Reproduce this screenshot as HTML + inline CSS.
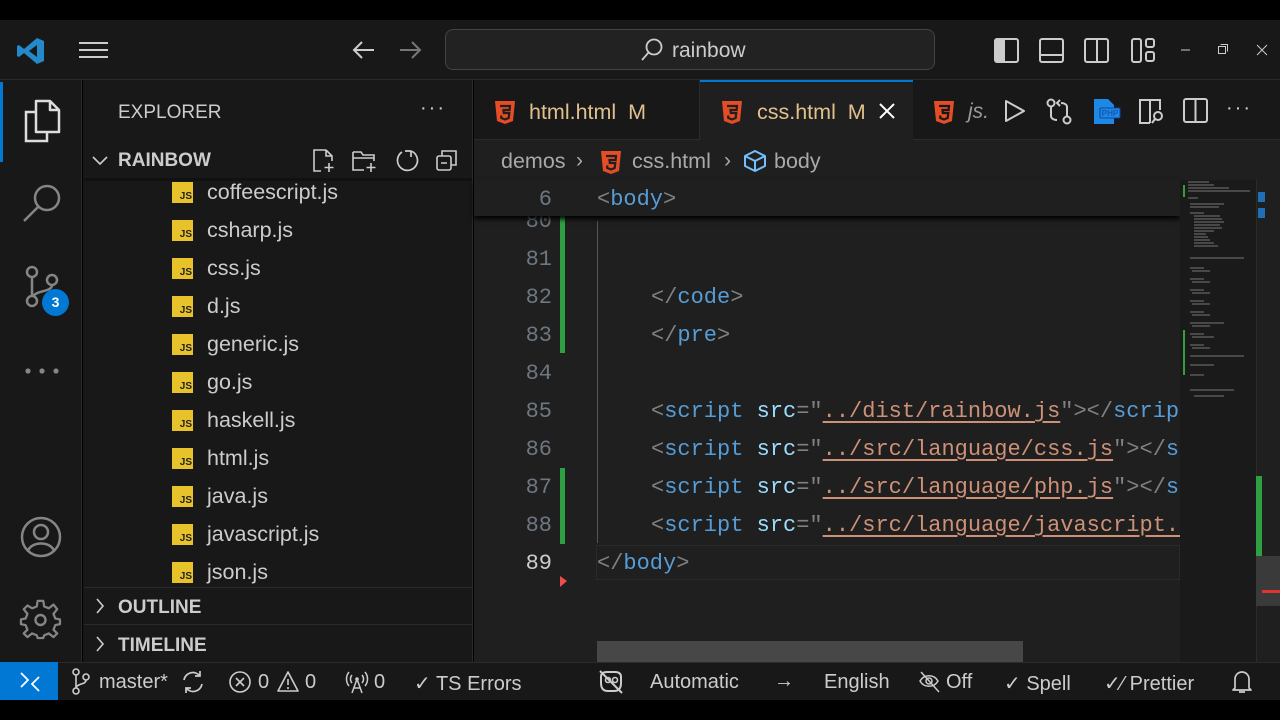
<!DOCTYPE html>
<html><head><meta charset="utf-8"><style>
*{box-sizing:border-box;margin:0;padding:0}
body{width:1280px;height:720px;background:#000;position:relative;overflow:hidden;font-family:"Liberation Sans",sans-serif;color:#ccc}
.a{position:absolute}
.mono{font-family:"Liberation Mono",monospace;font-size:22px}
.t{color:#808080}.tg{color:#569cd6}.at{color:#9cdcfe}.s{color:#ce9178;text-decoration:underline;text-underline-offset:4px}
.file{position:absolute;left:172px;height:38px;display:flex;align-items:center;font-size:21.5px;color:#ccc;padding-top:3px}
.js{width:21px;height:21px;background:#e8c22b;color:#222;font-size:10px;font-weight:bold;display:flex;align-items:flex-end;justify-content:flex-end;padding:0 1px 1px 0;margin-right:14px}
.ln{position:absolute;left:490px;width:62px;text-align:right;color:#6e7681}
svg{position:absolute;overflow:visible}
</style></head><body>
<!-- title bar -->
<div class="a" style="top:20px;left:0;width:1280px;height:60px;background:#181818;border-bottom:1px solid #2b2b2b"></div>
<svg style="left:16px;top:36px" width="30" height="30" viewBox="0 0 30 30"><path d="M21 2 L28 5 V25 L21 28 L8 17 L3 21 L1 20 V10 L3 9 L8 13 Z M21 9 L13 15 L21 21 Z" fill="#2489ca"/></svg>
<svg style="left:79px;top:42px" width="30" height="18"><path d="M0 1H29M0 8H29M0 15H29" stroke="#ccc" stroke-width="2"/></svg>
<svg style="left:352px;top:40px" width="24" height="20"><path d="M22 10H2M10 2L2 10L10 18" stroke="#ccc" stroke-width="2" fill="none"/></svg>
<svg style="left:398px;top:40px" width="24" height="20"><path d="M2 10H22M14 2L22 10L14 18" stroke="#777" stroke-width="2" fill="none"/></svg>
<div class="a" style="left:445px;top:29px;width:490px;height:41px;border:1px solid #444;border-radius:8px;background:#222"></div>
<svg style="left:640px;top:38px" width="24" height="24"><circle cx="14" cy="9" r="7.5" stroke="#ccc" stroke-width="1.8" fill="none"/><path d="M9 14L2 22" stroke="#ccc" stroke-width="1.8"/></svg>
<div class="a" style="left:672px;top:39px;font-size:21px;color:#ccc">rainbow</div>
<svg style="left:994px;top:38px" width="26" height="26"><rect x="1" y="1" width="23" height="23" rx="2" stroke="#ccc" stroke-width="2" fill="none"/><rect x="1" y="1" width="10" height="23" fill="#ccc"/></svg>
<svg style="left:1039px;top:38px" width="26" height="26"><rect x="1" y="1" width="23" height="23" rx="2" stroke="#ccc" stroke-width="2" fill="none"/><path d="M1 17H24" stroke="#ccc" stroke-width="2"/></svg>
<svg style="left:1084px;top:38px" width="26" height="26"><rect x="1" y="1" width="23" height="23" rx="2" stroke="#ccc" stroke-width="2" fill="none"/><path d="M13 1V24" stroke="#ccc" stroke-width="2"/></svg>
<svg style="left:1131px;top:38px" width="26" height="26"><rect x="1" y="1" width="9" height="23" rx="2" stroke="#ccc" stroke-width="2" fill="none"/><rect x="15" y="1" width="8" height="8" rx="2" stroke="#ccc" stroke-width="2" fill="none"/><rect x="15" y="14" width="8" height="9" rx="2" stroke="#ccc" stroke-width="2" fill="none"/></svg>
<svg style="left:1181px;top:49px" width="10" height="2"><path d="M0 1H9" stroke="#ccc"/></svg>
<svg style="left:1218px;top:44px" width="10" height="10"><rect x="0.5" y="2.5" width="7" height="7" stroke="#ccc" fill="none"/><path d="M2.5 0.5H9.5V7.5" stroke="#ccc" fill="none"/></svg>
<svg style="left:1256px;top:44px" width="12" height="12"><path d="M1 1L11 11M11 1L1 11" stroke="#ccc"/></svg>
<!-- activity bar -->
<div class="a" style="top:80px;left:0;width:82px;height:582px;background:#181818;border-right:1px solid #2b2b2b"></div>
<div class="a" style="top:82px;left:0;width:3px;height:80px;background:#0078d4"></div>
<svg style="left:22px;top:100px" width="40" height="42"><path d="M14 1H28L37 10V32H14Z M28 1V10H37" stroke="#ddd" stroke-width="2.5" fill="none" stroke-linejoin="round"/><path d="M14 12H4V41H25V32" stroke="#ddd" stroke-width="2.5" fill="none"/></svg>
<svg style="left:22px;top:183px" width="42" height="42"><circle cx="25" cy="15" r="12" stroke="#858585" stroke-width="2.5" fill="none"/><path d="M16 24L2 38" stroke="#858585" stroke-width="2.5"/></svg>
<svg style="left:24px;top:266px" width="36" height="42"><circle cx="8" cy="6" r="5" stroke="#858585" stroke-width="2.5" fill="none"/><circle cx="8" cy="35" r="5" stroke="#858585" stroke-width="2.5" fill="none"/><circle cx="28" cy="14" r="5" stroke="#858585" stroke-width="2.5" fill="none"/><path d="M8 11V30M28 19C28 26 14 24 9 30" stroke="#858585" stroke-width="2.5" fill="none"/></svg>
<div class="a" style="left:42px;top:289px;width:27px;height:27px;border-radius:50%;background:#0078d4;color:#fff;font-size:14px;font-weight:bold;text-align:center;line-height:27px">3</div>
<svg style="left:25px;top:368px" width="34" height="6"><circle cx="3" cy="3" r="2.6" fill="#858585"/><circle cx="17" cy="3" r="2.6" fill="#858585"/><circle cx="31" cy="3" r="2.6" fill="#858585"/></svg>
<svg style="left:20px;top:516px" width="42" height="42"><circle cx="21" cy="21" r="19" stroke="#858585" stroke-width="2.5" fill="none"/><circle cx="21" cy="16" r="7" stroke="#858585" stroke-width="2.5" fill="none"/><path d="M8 35C11 25 31 25 34 35" stroke="#858585" stroke-width="2.5" fill="none"/></svg>
<svg style="left:20px;top:599px" width="42" height="42" viewBox="0 0 42 42"><path d="M18 2H24L25 8L30 10L35 6L39 11L35 16L37 21L42 22V27L37 28L35 33L39 37L35 41L30 37L25 39L24 42H18L17 39L12 37L7 41L3 37L7 33L5 28L0 27V22L5 21L7 16L3 11L7 7L12 10L17 8Z" transform="scale(.93) translate(1 0)" stroke="#858585" stroke-width="2.4" fill="none" stroke-linejoin="round"/><circle cx="20.5" cy="21" r="5" stroke="#858585" stroke-width="2.4" fill="none"/></svg>
<!-- sidebar -->
<div class="a" style="top:80px;left:83px;width:390px;height:582px;background:#181818;border-right:1px solid #2b2b2b"></div>
<div class="a" style="left:118px;top:102px;font-size:19px;color:#ccc">EXPLORER</div>
<div class="a" style="left:420px;top:97px;font-size:20px;color:#ccc;letter-spacing:2px">···</div>
<svg style="left:92px;top:155px" width="16" height="12"><path d="M1 2L8 9L15 2" stroke="#ccc" stroke-width="1.6" fill="none"/></svg>
<div class="a" style="left:118px;top:150px;font-size:19px;font-weight:bold;color:#ccc">RAINBOW</div>
<svg style="left:312px;top:149px" width="24" height="24"><path d="M14 1H2V22H9M14 1L20 7V12M14 1V7H20M17 14V23M12.5 18.5H21.5" stroke="#ccc" stroke-width="1.6" fill="none"/></svg>
<svg style="left:352px;top:149px" width="28" height="24"><path d="M1 3H9L11 6H22V12M1 3V21H12M1 9H22M19 14V23M14.5 18.5H23.5" stroke="#ccc" stroke-width="1.6" fill="none"/></svg>
<svg style="left:395px;top:149px" width="24" height="24"><path d="M7 3A10 10 0 1 0 16 2M16 2V8M16 2H10" stroke="#ccc" stroke-width="1.7" fill="none"/></svg>
<svg style="left:436px;top:149px" width="24" height="24"><rect x="1" y="7" width="14" height="14" rx="2" stroke="#ccc" stroke-width="1.6" fill="none"/><path d="M6 7V2H20V16H15M5 14H11" stroke="#ccc" stroke-width="1.6" fill="none"/></svg>
<div class="a" style="left:84px;top:178px;width:388px;height:3px;background:#111"></div>
<div class="file" style="top:172px"><span class="js">JS</span>coffeescript.js</div>
<div class="file" style="top:210px"><span class="js">JS</span>csharp.js</div>
<div class="file" style="top:248px"><span class="js">JS</span>css.js</div>
<div class="file" style="top:286px"><span class="js">JS</span>d.js</div>
<div class="file" style="top:324px"><span class="js">JS</span>generic.js</div>
<div class="file" style="top:362px"><span class="js">JS</span>go.js</div>
<div class="file" style="top:400px"><span class="js">JS</span>haskell.js</div>
<div class="file" style="top:438px"><span class="js">JS</span>html.js</div>
<div class="file" style="top:476px"><span class="js">JS</span>java.js</div>
<div class="file" style="top:514px"><span class="js">JS</span>javascript.js</div>
<div class="file" style="top:552px"><span class="js">JS</span>json.js</div>
<div class="a" style="left:84px;top:587px;width:388px;height:38px;background:#181818;border-top:1px solid #2b2b2b"></div>
<div class="a" style="left:84px;top:624px;width:388px;height:38px;background:#181818;border-top:1px solid #2b2b2b"></div>
<svg style="left:95px;top:598px" width="10" height="16"><path d="M2 1L8 8L2 15" stroke="#ccc" stroke-width="1.6" fill="none"/></svg>
<svg style="left:95px;top:636px" width="10" height="16"><path d="M2 1L8 8L2 15" stroke="#ccc" stroke-width="1.6" fill="none"/></svg>
<div class="a" style="left:118px;top:597px;font-size:19px;font-weight:bold;color:#ccc">OUTLINE</div>
<div class="a" style="left:118px;top:635px;font-size:19px;font-weight:bold;color:#ccc">TIMELINE</div>
<!-- editor -->
<div class="a" style="top:80px;left:474px;width:806px;height:582px;background:#1f1f1f"></div>
<div class="a" style="top:80px;left:474px;width:806px;height:60px;background:#181818;border-bottom:1px solid #2b2b2b"></div>
<div class="a" style="top:80px;left:474px;width:226px;height:60px;border-right:1px solid #2b2b2b"></div>
<div class="a" style="top:80px;left:700px;width:213px;height:61px;background:#1f1f1f;border-top:2px solid #0078d4"></div>
<svg style="left:494px;top:100px" width="22" height="24"><path d="M1 1H21L19 21L11 24L3 21Z" fill="#e44d26"/><path d="M6 6H16L15.6 10H9.5L9.8 13H15.3L14.7 18L11 19.5L7.3 18L7.1 15.5" stroke="#1f1f1f" stroke-width="2.2" fill="none"/></svg>
<div class="a" style="left:529px;top:100px;font-size:21.5px;color:#e2c08d">html.html&nbsp; M</div>
<svg style="left:721px;top:100px" width="22" height="24"><path d="M1 1H21L19 21L11 24L3 21Z" fill="#e44d26"/><path d="M6 6H16L15.6 10H9.5L9.8 13H15.3L14.7 18L11 19.5L7.3 18L7.1 15.5" stroke="#1f1f1f" stroke-width="2.2" fill="none"/></svg>
<div class="a" style="left:757px;top:100px;font-size:21.5px;color:#e2c08d">css.html&nbsp; M</div>
<svg style="left:879px;top:103px" width="16" height="16"><path d="M1 1L15 15M15 1L1 15" stroke="#fff" stroke-width="2"/></svg>
<svg style="left:933px;top:100px" width="22" height="24"><path d="M1 1H21L19 21L11 24L3 21Z" fill="#e44d26"/><path d="M6 6H16L15.6 10H9.5L9.8 13H15.3L14.7 18L11 19.5L7.3 18L7.1 15.5" stroke="#181818" stroke-width="2.2" fill="none"/></svg>
<div class="a" style="left:968px;top:100px;font-size:21px;color:#999;font-style:italic">js.</div>
<svg style="left:1004px;top:99px" width="22" height="24"><path d="M2 2L20 12L2 22Z" stroke="#ccc" stroke-width="2" fill="none" stroke-linejoin="round"/></svg>
<svg style="left:1046px;top:98px" width="28" height="28"><circle cx="5" cy="5" r="3.5" stroke="#ccc" stroke-width="2" fill="none"/><circle cx="21" cy="22" r="3.5" stroke="#ccc" stroke-width="2" fill="none"/><path d="M5 9V18C5 20 7 22 11 22M21 18V9C21 7 19 5 15 5M14 2L11 5L14 8" stroke="#ccc" stroke-width="2" fill="none"/></svg>
<svg style="left:1092px;top:98px" width="28" height="28"><path d="M2 1H16L22 7V26H2Z" fill="#1e88e5"/><rect x="8" y="10" width="20" height="10" rx="1" fill="#1e88e5" stroke="#0d47a1"/><text x="18" y="18" font-size="8" font-family="Liberation Sans" fill="#0d47a1" text-anchor="middle">PHP</text></svg>
<svg style="left:1138px;top:98px" width="28" height="28"><path d="M12 25H2V2H22V12M12 2V25" stroke="#ccc" stroke-width="2" fill="none"/><circle cx="20" cy="18" r="4" stroke="#ccc" stroke-width="2" fill="none"/><path d="M17 21L14 25" stroke="#ccc" stroke-width="2"/></svg>
<svg style="left:1183px;top:98px" width="26" height="26"><rect x="1" y="1" width="23" height="23" rx="2" stroke="#ccc" stroke-width="2" fill="none"/><path d="M12.5 1V24" stroke="#ccc" stroke-width="2"/></svg>
<div class="a" style="left:1226px;top:97px;font-size:20px;color:#ccc;letter-spacing:2px">···</div>
<!-- breadcrumb -->
<div class="a" style="left:501px;top:149px;font-size:21.5px;color:#a9a9a9">demos</div>
<div class="a" style="left:576px;top:149px;font-size:21px;color:#a9a9a9">›</div>
<svg style="left:600px;top:150px" width="22" height="24"><path d="M1 1H21L19 21L11 24L3 21Z" fill="#e44d26"/><path d="M6 6H16L15.6 10H9.5L9.8 13H15.3L14.7 18L11 19.5L7.3 18L7.1 15.5" stroke="#1f1f1f" stroke-width="2.2" fill="none"/></svg>
<div class="a" style="left:632px;top:149px;font-size:21.5px;color:#a9a9a9">css.html</div>
<div class="a" style="left:724px;top:149px;font-size:21px;color:#a9a9a9">›</div>
<svg style="left:743px;top:149px" width="24" height="24"><path d="M12 2L22 7V17L12 22L2 17V7Z M2 7L12 12L22 7M12 12V22" stroke="#75beff" stroke-width="2" fill="none" stroke-linejoin="round"/></svg>
<div class="a" style="left:774px;top:149px;font-size:21.5px;color:#a9a9a9">body</div>
<!-- code -->
<div class="a" style="left:597px;top:221px;width:1px;height:322px;background:#555"></div>
<div class="a" style="left:560px;top:216px;width:5px;height:137px;background:#2ea043"></div>
<div class="a" style="left:560px;top:468px;width:5px;height:76px;background:#2ea043"></div>
<div class="a" style="left:596px;top:545px;width:584px;height:35px;border:1px solid #2a2a2a"></div>
<svg style="left:559px;top:575px" width="10" height="14"><path d="M1 1L8 6L1 12Z" fill="#f14c4c"/></svg>
<div class="mono ln" style="top:209px">80</div>
<div class="mono ln" style="top:247px">81</div>
<div class="mono ln" style="top:285px">82</div>
<div class="mono ln" style="top:323px">83</div>
<div class="mono ln" style="top:361px">84</div>
<div class="mono ln" style="top:399px">85</div>
<div class="mono ln" style="top:437px">86</div>
<div class="mono ln" style="top:475px">87</div>
<div class="mono ln" style="top:513px">88</div>
<div class="mono ln" style="top:551px;color:#ccc">89</div>
<div class="mono a" style="left:651px;top:285px;white-space:pre"><span class="t">&lt;/</span><span class="tg">code</span><span class="t">&gt;</span></div>
<div class="mono a" style="left:651px;top:323px;white-space:pre"><span class="t">&lt;/</span><span class="tg">pre</span><span class="t">&gt;</span></div>
<div class="a" style="left:651px;top:399px;width:530px;height:160px;overflow:hidden">
<div class="mono a" style="left:0;top:0;white-space:pre"><span class="t">&lt;</span><span class="tg">script</span> <span class="at">src</span><span class="t">="</span><span class="s">../dist/rainbow.js</span><span class="t">"&gt;&lt;/</span><span class="tg">script</span><span class="t">&gt;</span></div>
<div class="mono a" style="left:0;top:38px;white-space:pre"><span class="t">&lt;</span><span class="tg">script</span> <span class="at">src</span><span class="t">="</span><span class="s">../src/language/css.js</span><span class="t">"&gt;&lt;/</span><span class="tg">script</span><span class="t">&gt;</span></div>
<div class="mono a" style="left:0;top:76px;white-space:pre"><span class="t">&lt;</span><span class="tg">script</span> <span class="at">src</span><span class="t">="</span><span class="s">../src/language/php.js</span><span class="t">"&gt;&lt;/</span><span class="tg">script</span><span class="t">&gt;</span></div>
<div class="mono a" style="left:0;top:114px;white-space:pre"><span class="t">&lt;</span><span class="tg">script</span> <span class="at">src</span><span class="t">="</span><span class="s">../src/language/javascript.js</span><span class="t">"&gt;</span></div>
</div>
<div class="mono a" style="left:597px;top:551px;white-space:pre"><span class="t">&lt;/</span><span class="tg">body</span><span class="t">&gt;</span></div>
<!-- sticky -->
<div class="a" style="left:474px;top:180px;width:706px;height:36px;background:#1f1f1f;box-shadow:0 3px 5px #000"></div>
<div class="mono ln" style="top:187px">6</div>
<div class="mono a" style="left:597px;top:187px;white-space:pre"><span class="t">&lt;</span><span class="tg">body</span><span class="t">&gt;</span></div>
<!-- minimap -->
<div class="a" style="left:1180px;top:180px;width:76px;height:482px;background:#1a1a1a"></div>
<svg style="left:1184px;top:180px" width="70" height="240">
<g stroke="#777" stroke-width="1">
<path d="M4 2H25M4 5H30M4 8H45M4 11H66M4 18H14M6 24H40M6 27H35M6 33H20M10 36H36M10 39H38M10 42H40M10 45H36M10 48H38M10 51H30M10 54H22M10 57H24M10 60H26M10 63H30M10 66H34M6 78H60M6 88H20M8 91H26M6 99H20M8 102H26M6 110H20M8 113H26M6 121H20M8 124H26M6 132H20M8 135H26M6 143H40M8 146H26M6 154H20M8 157H30M6 165H20M8 168H26M6 176H60M6 185H30M6 195H20M6 210H50M10 216H40"/>
</g></svg>
<div class="a" style="left:1183px;top:185px;width:2px;height:12px;background:#2ea043"></div>
<div class="a" style="left:1183px;top:330px;width:2px;height:45px;background:#2ea043"></div>
<div class="a" style="left:1256px;top:180px;width:24px;height:482px;background:#1f1f1f;border-left:1px solid #2b2b2b"></div>
<div class="a" style="left:1258px;top:192px;width:7px;height:10px;background:#1f6fb5"></div>
<div class="a" style="left:1258px;top:208px;width:7px;height:10px;background:#1f6fb5"></div>
<div class="a" style="left:1256px;top:476px;width:6px;height:80px;background:#2ea043"></div>
<div class="a" style="left:1256px;top:556px;width:24px;height:50px;background:#3a3a3a"></div>
<div class="a" style="left:1262px;top:590px;width:18px;height:3px;background:#d33"></div>
<!-- hscroll -->
<div class="a" style="left:597px;top:641px;width:426px;height:21px;background:#474747"></div>
<!-- status bar -->
<div class="a" style="left:0;top:662px;width:1280px;height:38px;background:#181818;border-top:1px solid #2b2b2b"></div>
<div class="a" style="left:0;top:662px;width:58px;height:38px;background:#0078d4"></div>
<svg style="left:19px;top:671px" width="22" height="22"><path d="M2 2L9 9L2 16M20 6L13 13L20 20" stroke="#fff" stroke-width="1.8" fill="none"/></svg>
<svg style="left:71px;top:668px" width="20" height="28"><circle cx="5" cy="4" r="3" stroke="#ccc" stroke-width="1.6" fill="none"/><circle cx="5" cy="23" r="3" stroke="#ccc" stroke-width="1.6" fill="none"/><circle cx="15" cy="9" r="3" stroke="#ccc" stroke-width="1.6" fill="none"/><path d="M5 7V20M15 12C15 17 6 15 5 20" stroke="#ccc" stroke-width="1.6" fill="none"/></svg>
<div class="a" style="left:99px;top:671px;font-size:20px;color:#ccc">master*</div>
<svg style="left:180px;top:669px" width="26" height="26"><path d="M4 11A9 9 0 0 1 20 7M22 15A9 9 0 0 1 6 19M20 2V7H15M6 24V19H11" stroke="#ccc" stroke-width="1.7" fill="none"/></svg>
<svg style="left:229px;top:670px" width="24" height="24"><circle cx="11" cy="12" r="10" stroke="#ccc" stroke-width="1.6" fill="none"/><path d="M7 8L15 16M15 8L7 16" stroke="#ccc" stroke-width="1.6"/></svg>
<div class="a" style="left:258px;top:671px;font-size:20px;color:#ccc">0</div>
<svg style="left:277px;top:670px" width="24" height="24"><path d="M11 2L21 21H1Z" stroke="#ccc" stroke-width="1.6" fill="none" stroke-linejoin="round"/><path d="M11 9V15M11 17V19" stroke="#ccc" stroke-width="1.6"/></svg>
<div class="a" style="left:305px;top:671px;font-size:20px;color:#ccc">0</div>
<svg style="left:344px;top:669px" width="26" height="26"><path d="M5 3A11 11 0 0 0 5 17M21 3A11 11 0 0 1 21 17M8 6A6 6 0 0 0 8 14M18 6A6 6 0 0 1 18 14M13 10L8 24M13 10L18 24M10 19H16" stroke="#ccc" stroke-width="1.5" fill="none"/><circle cx="13" cy="10" r="1.8" fill="#ccc"/></svg>
<div class="a" style="left:374px;top:671px;font-size:20px;color:#ccc">0</div>
<div class="a" style="left:414px;top:671px;font-size:20px;color:#ccc">✓ TS Errors</div>
<svg style="left:598px;top:669px" width="26" height="26"><path d="M3 8C3 4 6 3 9 3H17C20 3 23 4 23 8V14C23 20 20 22 16 22H10C6 22 3 20 3 14Z" stroke="#ccc" stroke-width="2" fill="none"/><circle cx="10" cy="11" r="2.5" stroke="#ccc" stroke-width="1.6" fill="none"/><circle cx="17" cy="11" r="2.5" stroke="#ccc" stroke-width="1.6" fill="none"/><path d="M2 2L24 24" stroke="#ccc" stroke-width="2"/></svg>
<div class="a" style="left:650px;top:671px;font-size:20px;color:#ccc">Automatic</div>
<div class="a" style="left:774px;top:670px;font-size:20px;color:#ccc">→</div>
<div class="a" style="left:824px;top:671px;font-size:20px;color:#ccc">English</div>
<svg style="left:918px;top:670px" width="24" height="24"><path d="M2 11C6 4 16 4 20 11C16 18 6 18 2 11Z" stroke="#ccc" stroke-width="1.5" fill="none"/><circle cx="11" cy="11" r="3" stroke="#ccc" stroke-width="1.5" fill="none"/><path d="M3 2L21 22" stroke="#ccc" stroke-width="1.5"/></svg>
<div class="a" style="left:946px;top:671px;font-size:20px;color:#ccc">Off</div>
<div class="a" style="left:1004px;top:671px;font-size:20px;color:#ccc">✓ Spell</div>
<div class="a" style="left:1104px;top:671px;font-size:20px;color:#ccc">✓⁄ Prettier</div>
<svg style="left:1231px;top:669px" width="22" height="26"><path d="M4 19V10A7 7 0 0 1 18 10V19L20 21H2Z M8 23H14" stroke="#ccc" stroke-width="1.7" fill="none" stroke-linejoin="round"/></svg>
</body></html>
